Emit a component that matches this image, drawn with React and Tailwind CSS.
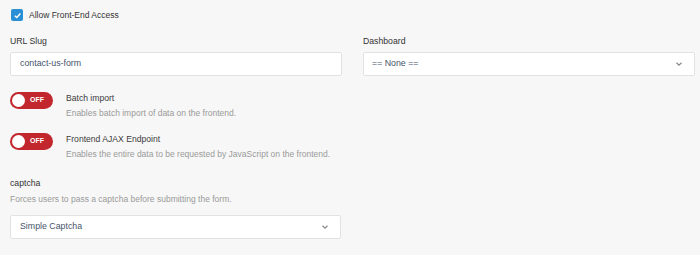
import React from "react";

const Toggle = () => (
  <div className="relative flex h-[17px] w-[43px] shrink-0 items-center rounded-full bg-[#c1272d]">
    <div className="ml-[2px] h-[13px] w-[13px] rounded-full bg-white" />
    <span className="ml-[5px] text-[7px] font-bold text-white">OFF</span>
  </div>
);

const Chevron = () => (
  <svg width="8" height="6" viewBox="0 0 8 6" className="text-[#888]">
    <path d="M1.5 1.8 L4 4.2 L6.5 1.8" fill="none" stroke="currentColor" strokeWidth="1.2" />
  </svg>
);

const ToggleRow = ({ title, desc }) => (
  <div className="flex items-start">
    <Toggle />
    <div className="ml-[13px] -mt-[1px]">
      <div className="text-[8.6px] leading-[14px] text-[#3c3c3c]">{title}</div>
      <div className="mt-[1px] text-[8.5px] leading-[14px] text-[#9a9a9a]">{desc}</div>
    </div>
  </div>
);

export default function App() {
  return (
    <div
      className="h-[255px] w-[700px] bg-[#f7f7f7] px-[10px] pt-[9px]"
      style={{ fontFamily: '"Liberation Sans", Arial, sans-serif' }}
    >
      <label className="flex items-center pl-[1px]">
        <span className="flex h-[12px] w-[12px] items-center justify-center rounded-[2px] bg-[#2a8fd4]">
          <svg width="9" height="9" viewBox="0 0 10 10">
            <path d="M2 5.2 L4.2 7.3 L8.2 2.8" fill="none" stroke="white" strokeWidth="1.6" />
          </svg>
        </span>
        <span className="ml-[6px] text-[8.5px] text-[#333]">Allow Front-End Access</span>
      </label>

      <div className="mt-[13px] grid grid-cols-[332px_332px] gap-x-[21px]">
        <div>
          <div className="text-[8.7px] leading-[12px] text-[#333]">URL Slug</div>
          <div className="mt-[5px] flex h-[24px] items-center rounded-[2px] border border-[#e2e2e2] bg-white px-[9px] text-[8.8px] text-[#46546a]">
            contact-us-form
          </div>
        </div>
        <div>
          <div className="text-[8.7px] leading-[12px] text-[#333]">Dashboard</div>
          <div className="mt-[5px] flex h-[24px] items-center justify-between rounded-[2px] border border-[#e2e2e2] bg-white pl-[8px] pr-[11px] text-[8.8px] text-[#46546a]">
            <span>== None ==</span>
            <Chevron />
          </div>
        </div>
      </div>

      <div className="mt-[16px] flex flex-col gap-[13px]">
        <ToggleRow title="Batch import" desc="Enables batch import of data on the frontend." />
        <ToggleRow
          title="Frontend AJAX Endpoint"
          desc="Enables the entire data to be requested by JavaScript on the frontend."
        />
      </div>

      <div className="mt-[15px]">
        <div className="text-[8.7px] leading-[14px] text-[#333]">captcha</div>
        <div className="mt-[2px] text-[8.5px] leading-[14px] text-[#9a9a9a]">
          Forces users to pass a captcha before submitting the form.
        </div>
        <div className="mt-[9px] flex h-[24px] w-[331px] items-center justify-between rounded-[2px] border border-[#e2e2e2] bg-white pl-[9px] pr-[11px] text-[8.8px] text-[#46546a]">
          <span>Simple Captcha</span>
          <Chevron />
        </div>
      </div>
    </div>
  );
}
